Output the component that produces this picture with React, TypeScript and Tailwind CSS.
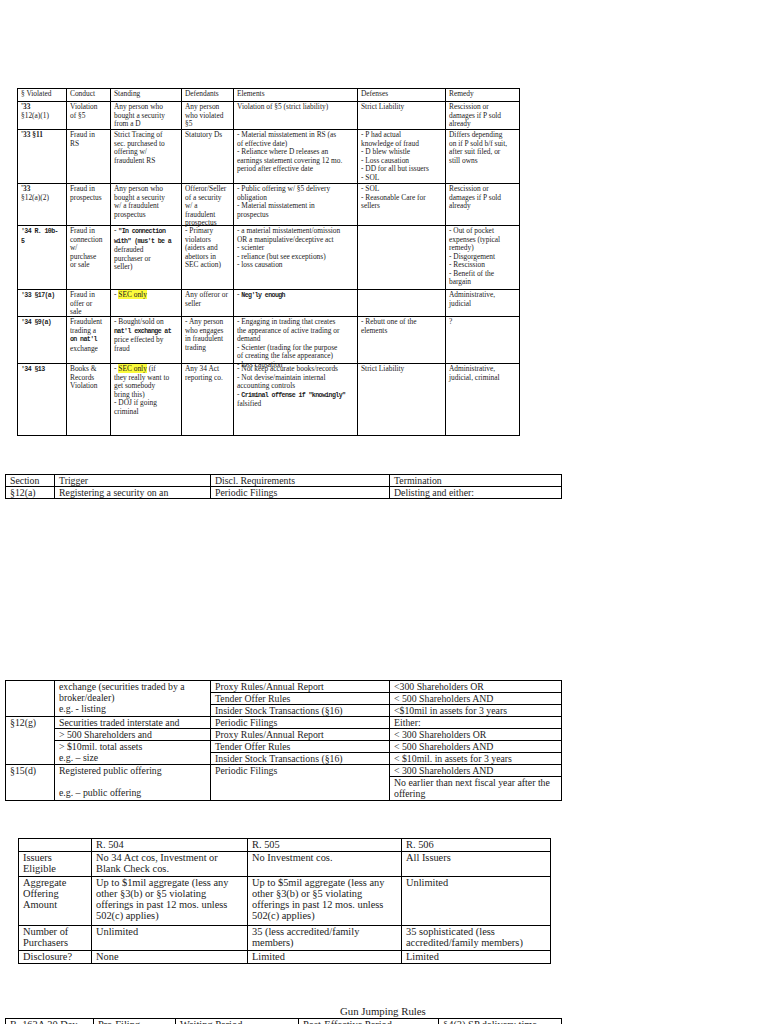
import React from "react";

type Row = { h: string; cells: React.ReactNode[][] };

const G = ({ children }: { children: React.ReactNode }) => (
  <span className="font-['Liberation_Mono',monospace] text-[6.6px] font-bold tracking-[-0.6px]">
    {children}
  </span>
);

const Hl = ({ children }: { children: React.ReactNode }) => (
  <span className="bg-[#fbfb3c]">{children}</span>
);

const violations: Row[] = [
  {
    h: "h-[26px]",
    cells: [
      [<b key="a">'33</b>, "§12(a)(1)"],
      ["Violation", "of §5"],
      ["Any person who", "bought a security", "from a D"],
      ["Any person", "who violated", "§5"],
      ["Violation of §5 (strict liability)"],
      ["Strict Liability"],
      ["Rescission or", "damages if P sold", "already"],
    ],
  },
  {
    h: "h-[52px]",
    cells: [
      [<b key="a">'33 §11</b>],
      ["Fraud in", "RS"],
      ["Strict Tracing of", "sec. purchased to", "offering w/", "fraudulent RS"],
      ["Statutory Ds"],
      [
        "- Material misstatement in RS (as",
        "of effective date)",
        "- Reliance where D releases an",
        "earnings statement covering 12 mo.",
        "period after effective date",
      ],
      [
        "- P had actual",
        "knowledge of fraud",
        "- D blew whistle",
        "- Loss causation",
        "- DD for all but issuers",
        "- SOL",
      ],
      ["Differs depending", "on if P sold b/f suit,", "after suit filed, or", "still owns"],
    ],
  },
  {
    h: "h-[40px]",
    cells: [
      [<b key="a">'33</b>, "§12(a)(2)"],
      ["Fraud in", "prospectus"],
      ["Any person who", "bought a security", "w/ a fraudulent", "prospectus"],
      ["Offeror/Seller", "of a security", "w/ a", "fraudulent", "prospectus"],
      [
        "- Public offering w/ §5 delivery",
        "obligation",
        "- Material misstatement in",
        "prospectus",
      ],
      ["- SOL", "- Reasonable Care for", "sellers"],
      ["Rescission or", "damages if P sold", "already"],
    ],
  },
  {
    h: "h-[62px]",
    cells: [
      [<G key="a">'34 R. 10b-</G>, <G key="b">5</G>],
      ["Fraud in", "connection", "w/", "purchase", "or sale"],
      [
        <span key="a">
          - <G>"In connection</G>
        </span>,
        <G key="b">with" (mus't be a</G>,
        "defrauded",
        "purchaser or",
        "seller)",
      ],
      ["- Primary", "violators", "(aiders and", "abettors in", "SEC action)"],
      [
        "- a material misstatement/omission",
        "OR a manipulative/deceptive act",
        "- scienter",
        "- reliance (but see exceptions)",
        "- loss causation",
      ],
      [],
      [
        "- Out of pocket",
        "expenses (typical",
        "remedy)",
        "- Disgorgement",
        "- Rescission",
        "- Benefit of the",
        "bargain",
      ],
    ],
  },
  {
    h: "h-[25px]",
    cells: [
      [<G key="a">'33 §17(a)</G>],
      ["Fraud in", "offer or", "sale"],
      [
        <span key="a">
          - <Hl>SEC only</Hl>
        </span>,
      ],
      ["Any offeror or", "seller"],
      [
        <span key="a">
          - <G>Neg'ly enough</G>
        </span>,
      ],
      [],
      ["Administrative,", "judicial"],
    ],
  },
  {
    h: "h-[45px]",
    cells: [
      [<G key="a">'34 §9(a)</G>],
      ["Fraudulent", "trading a", <G key="a">on nat'l</G>, "exchange"],
      ["- Bought/sold on", <G key="a">nat'l exchange at</G>, "price effected by", "fraud"],
      ["- Any person", "who engages", "in fraudulent", "trading"],
      [
        "-  Engaging in trading that creates",
        "the appearance of active trading or",
        "demand",
        "- Scienter (trading for the purpose",
        "of creating the false appearance)",
        "- loss causation",
      ],
      ["- Rebutt one of the", "elements"],
      ["?"],
    ],
  },
  {
    h: "h-[70px]",
    cells: [
      [<G key="a">'34 §13</G>],
      ["Books &", "Records", "Violation"],
      [
        <span key="a">
          - <Hl>SEC only</Hl> (if
        </span>,
        "they really want to",
        "get somebody",
        "bring this)",
        "- DOJ if going",
        "criminal",
      ],
      ["Any 34 Act", "reporting co."],
      [
        "- Not keep accurate books/records",
        "- Not devise/maintain internal",
        "accounting controls",
        <span key="a">
          - <G>Criminal offense if "knowingly"</G>
        </span>,
        "falsified",
      ],
      ["Strict Liability"],
      ["Administrative,", "judicial, criminal"],
    ],
  },
];

const headers = ["§ Violated", "Conduct", "Standing", "Defendants", "Elements", "Defenses", "Remedy"];

const c1 = "border border-black align-top px-[3px] pt-[1px] pb-0";
const c2 = "border border-black align-top px-[4px] py-0 leading-[11px]";

function Lines({ lines, h }: { lines: React.ReactNode[]; h: string }) {
  return (
    <div className={h}>
      {lines.map((l, i) => (
        <div key={i} className="whitespace-nowrap">
          {l}
        </div>
      ))}
    </div>
  );
}

function ViolationsTable() {
  return (
    <table className="ml-[17px] mt-[88px] w-[502px] table-fixed border-collapse text-[7.4px] leading-[8.5px]">
      <colgroup>
        <col className="w-[49px]" />
        <col className="w-[44px]" />
        <col className="w-[71px]" />
        <col className="w-[52px]" />
        <col className="w-[124px]" />
        <col className="w-[88px]" />
        <col className="w-[74px]" />
      </colgroup>
      <tbody>
        <tr>
          {headers.map((h) => (
            <td key={h} className={c1}>
              <Lines lines={[h]} h="h-[11px]" />
            </td>
          ))}
        </tr>
        {violations.map((r, i) => (
          <tr key={i}>
            {r.cells.map((c, j) => (
              <td key={j} className={c1}>
                <Lines lines={c} h={r.h} />
              </td>
            ))}
          </tr>
        ))}
      </tbody>
    </table>
  );
}

function SectionCols() {
  return (
    <colgroup>
      <col className="w-[49px]" />
      <col className="w-[156px]" />
      <col className="w-[179px]" />
      <col className="w-[172px]" />
    </colgroup>
  );
}

export default function App() {
  return (
    <div className="relative h-[1024px] w-[768px] overflow-hidden bg-white font-['Liberation_Serif','Times_New_Roman',serif] text-[#1c1c1c]">
      <ViolationsTable />

      <table className="ml-[5px] mt-[38px] w-[556px] table-fixed border-collapse text-[9.8px]">
        <SectionCols />
        <tbody>
          <tr className="h-[12px]">
            <td className={c2}>Section</td>
            <td className={c2}>Trigger</td>
            <td className={c2}>Discl. Requirements</td>
            <td className={c2}>Termination</td>
          </tr>
          <tr className="h-[12px]">
            <td className={c2}>§12(a)</td>
            <td className={c2}>Registering a security on an</td>
            <td className={c2}>Periodic Filings</td>
            <td className={c2}>Delisting and either:</td>
          </tr>
        </tbody>
      </table>

      <table className="ml-[5px] mt-[181px] w-[556px] table-fixed border-collapse text-[9.8px]">
        <SectionCols />
        <tbody>
          <tr className="h-[12px]">
            <td className={c2} rowSpan={3}></td>
            <td className={c2} rowSpan={3}>
              exchange (securities traded by a
              <br />
              broker/dealer)
              <br />
              e.g. - listing
            </td>
            <td className={c2}>Proxy Rules/Annual Report</td>
            <td className={c2}>&lt;300 Shareholders OR</td>
          </tr>
          <tr className="h-[12px]">
            <td className={c2}>Tender Offer Rules</td>
            <td className={c2}>&lt; 500 Shareholders AND</td>
          </tr>
          <tr className="h-[12px]">
            <td className={c2}>Insider Stock Transactions (§16)</td>
            <td className={c2}>&lt;$10mil in assets for 3 years</td>
          </tr>
          <tr className="h-[12px]">
            <td className={c2} rowSpan={4}>
              §12(g)
            </td>
            <td className={c2}>Securities traded interstate and</td>
            <td className={c2}>Periodic Filings</td>
            <td className={c2}>Either:</td>
          </tr>
          <tr className="h-[12px]">
            <td className={c2}>&gt; 500 Shareholders and</td>
            <td className={c2}>Proxy Rules/Annual Report</td>
            <td className={c2}>&lt; 300 Shareholders OR</td>
          </tr>
          <tr className="h-[12px]">
            <td className={c2} rowSpan={2}>
              &gt; $10mil. total assets
              <br />
              e.g. – size
            </td>
            <td className={c2}>Tender Offer Rules</td>
            <td className={c2}>&lt; 500 Shareholders AND</td>
          </tr>
          <tr className="h-[12px]">
            <td className={c2}>Insider Stock Transactions (§16)</td>
            <td className={c2}>&lt; $10mil. in assets for 3 years</td>
          </tr>
          <tr className="h-[12px]">
            <td className={c2} rowSpan={2}>
              §15(d)
            </td>
            <td className={c2} rowSpan={2}>
              Registered public offering
              <br />
              <br />
              e.g. – public offering
            </td>
            <td className={c2} rowSpan={2}>
              Periodic Filings
            </td>
            <td className={c2}>&lt; 300 Shareholders AND</td>
          </tr>
          <tr className="h-[24px]">
            <td className={c2}>
              No earlier than next fiscal year after the
              <br />
              offering
            </td>
          </tr>
        </tbody>
      </table>

      <table className="ml-[18px] mt-[37px] w-[532px] table-fixed border-collapse text-[10.4px]">
        <colgroup>
          <col className="w-[73px]" />
          <col className="w-[156px]" />
          <col className="w-[154px]" />
          <col className="w-[149px]" />
        </colgroup>
        <tbody>
          <tr className="h-[13px]">
            <td className={c2}></td>
            <td className={c2}>R. 504</td>
            <td className={c2}>R. 505</td>
            <td className={c2}>R. 506</td>
          </tr>
          <tr className="h-[25px]">
            <td className={c2}>
              Issuers
              <br />
              Eligible
            </td>
            <td className={c2}>
              No 34 Act cos, Investment or
              <br />
              Blank Check cos.
            </td>
            <td className={c2}>No Investment cos.</td>
            <td className={c2}>All Issuers</td>
          </tr>
          <tr className="h-[49px]">
            <td className={c2}>
              Aggregate
              <br />
              Offering
              <br />
              Amount
            </td>
            <td className={c2}>
              Up to $1mil aggregate (less any
              <br />
              other §3(b) or §5 violating
              <br />
              offerings in past 12 mos. unless
              <br />
              502(c) applies)
            </td>
            <td className={c2}>
              Up to $5mil aggregate (less any
              <br />
              other §3(b) or §5 violating
              <br />
              offerings in past 12 mos. unless
              <br />
              502(c) applies)
            </td>
            <td className={c2}>Unlimited</td>
          </tr>
          <tr className="h-[25px]">
            <td className={c2}>
              Number of
              <br />
              Purchasers
            </td>
            <td className={c2}>Unlimited</td>
            <td className={c2}>
              35 (less accredited/family
              <br />
              members)
            </td>
            <td className={c2}>
              35 sophisticated (less
              <br />
              accredited/family members)
            </td>
          </tr>
          <tr className="h-[13px]">
            <td className={c2}>Disclosure?</td>
            <td className={c2}>None</td>
            <td className={c2}>Limited</td>
            <td className={c2}>Limited</td>
          </tr>
        </tbody>
      </table>

      <div className="ml-[340px] mt-[41px] text-[10.8px] leading-[13px]">Gun Jumping Rules</div>

      <table className="ml-[5px] w-[556px] table-fixed border-collapse text-[10.4px]">
        <colgroup>
          <col className="w-[88px]" />
          <col className="w-[82px]" />
          <col className="w-[123px]" />
          <col className="w-[140px]" />
          <col className="w-[123px]" />
        </colgroup>
        <tbody>
          <tr className="h-[14px]">
            <td className={c2}>R. 163A 30 Day</td>
            <td className={c2}>Pre-Filing</td>
            <td className={c2}>Waiting Period</td>
            <td className={c2}>Post-Effective Period</td>
            <td className={c2}>§4(3) SP delivery time</td>
          </tr>
        </tbody>
      </table>
    </div>
  );
}
